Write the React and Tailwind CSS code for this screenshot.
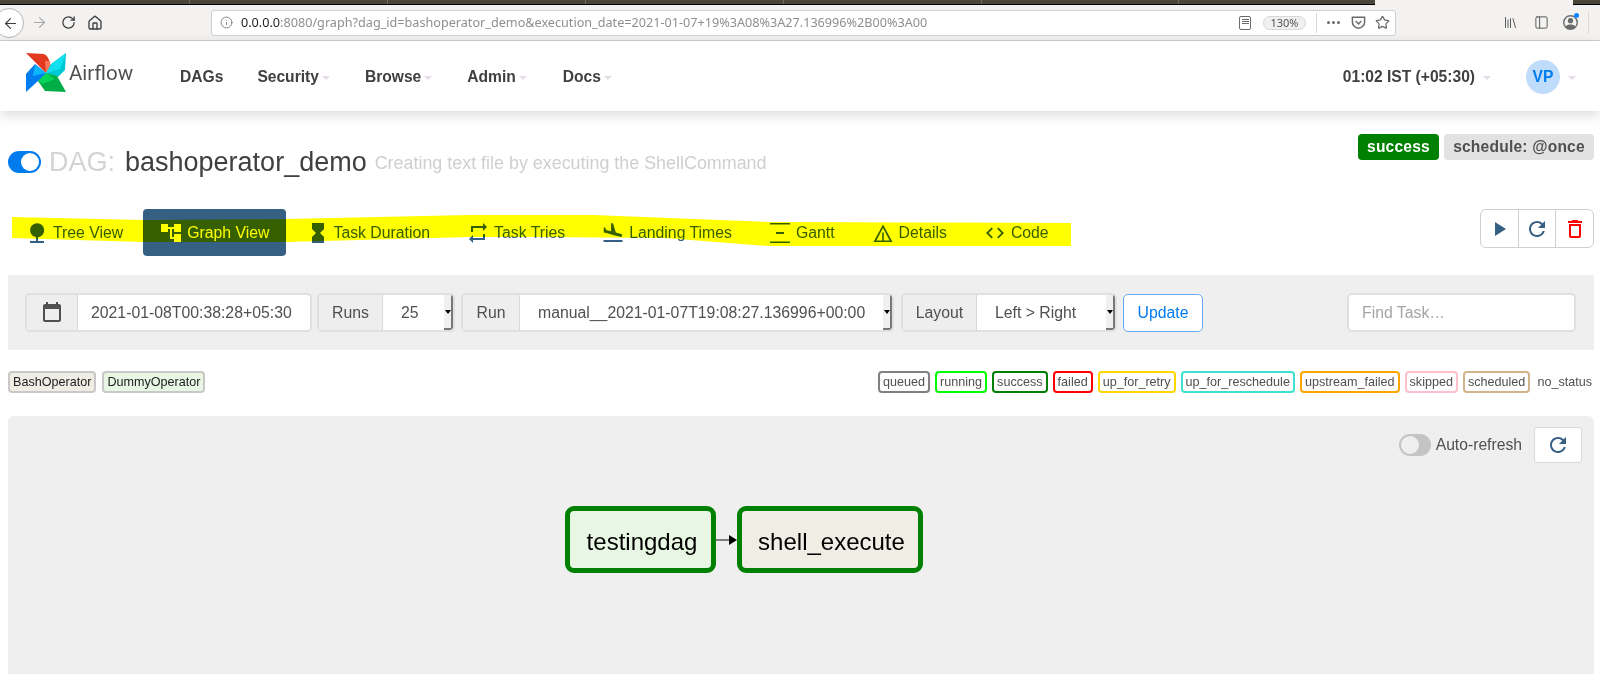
import React from 'react';
import { ArrowLeft, ArrowRight, RotateCw, Home, Info, Star, Library, PanelLeft, Menu } from 'lucide-react';

const tabIcons = {
  tree: 'M13 16.12c3.47-.41 6.17-3.36 6.17-6.95 0-3.87-3.13-7-7-7s-7 3.13-7 7c0 3.47 2.52 6.34 5.83 6.89V20H5v2h14v-2h-6v-3.88z',
  graph: 'M22 11V3h-7v3H9V3H2v8h7V8h2v10h4v3h7v-8h-7v3h-2V8h2v3z',
  hourglass: 'M6 2v6h.01L6 8.01 10 12l-4 4 .01.01H6V22h12v-5.99h-.01L18 16l-4-4 4-3.99-.01-.01H18V2H6z',
  repeat: 'M7 7h10v3l4-4-4-4v3H5v6h2V7zm10 10H7v-3l-4 4 4 4v-3h12v-6h-2v4z',
  land: 'M2.5 19h19v2h-19zm7.18-5.73l4.35 1.16 5.31 1.42c.8.21 1.62-.26 1.84-1.06.21-.8-.26-1.62-1.06-1.84l-5.31-1.42-2.76-9.02L10.12 2v8.28L5.15 8.95l-.93-2.32-1.45-.39v5.17l1.6.43 5.31 1.43z',
  gantt: 'M2 2h20v1.6H2zM8 11h8v2H8zM2 20.4h20V22H2z',
  warning: 'M12 3.5L2.5 21h19L12 3.5zm0 3.6L18.6 19.4h-5.8v-8h-1.6v8H5.4L12 7.1z',
  code: 'M8.6 6.4L3 12l5.6 5.6 1.3-1.3L5.6 12l4.3-4.3-1.3-1.3zm6.8 0l-1.3 1.3 4.3 4.3-4.3 4.3 1.3 1.3L21 12l-5.6-5.6z',
};

const refreshPath = 'M17.65 6.35A7.958 7.958 0 0012 4c-4.42 0-7.99 3.58-7.99 8s3.57 8 7.99 8c3.73 0 6.84-2.55 7.73-6h-2.08A5.99 5.99 0 0112 18c-3.31 0-6-2.69-6-6s2.69-6 6-6c1.66 0 3.14.69 4.22 1.78L13 11h7V4l-2.35 2.35z';

const tabs = [
  { label: 'Tree View', icon: 'tree' },
  { label: 'Graph View', icon: 'graph', active: true },
  { label: 'Task Duration', icon: 'hourglass' },
  { label: 'Task Tries', icon: 'repeat' },
  { label: 'Landing Times', icon: 'land' },
  { label: 'Gantt', icon: 'gantt' },
  { label: 'Details', icon: 'warning' },
  { label: 'Code', icon: 'code' },
];

const states = [
  { label: 'queued', border: 'border-[#808080]' },
  { label: 'running', border: 'border-[#00ff00]' },
  { label: 'success', border: 'border-[#008000]' },
  { label: 'failed', border: 'border-[#ff0000]' },
  { label: 'up_for_retry', border: 'border-[#ffd700]' },
  { label: 'up_for_reschedule', border: 'border-[#40e0d0]' },
  { label: 'upstream_failed', border: 'border-[#ffa500]' },
  { label: 'skipped', border: 'border-[#ffc0cb]' },
  { label: 'scheduled', border: 'border-[#d2b48c]' },
];

const Glyph = ({ d, className }) => (
  <svg viewBox="0 0 24 24" className={className} fill="currentColor">
    <path d={d} />
  </svg>
);

const Caret = ({ className = 'ml-[3px]' }) => (
  <span className={`mt-[2px] w-0 h-0 border-x-[4px] border-x-transparent border-t-[4px] border-t-[#e6dbe8] ${className}`} />
);

const Logo = () => (
  <svg viewBox="0 0 41 41" className="w-[41px] h-[41px] shrink-0 -mt-[6px]">
    <path d="M1 0 L19 1 Q24 3 25 12 L21 20 Z" fill="#e43921" />
    <path d="M20 8 L25 8 L25.5 13 L21 20 Z" fill="#ff7557" />
    <path d="M41 0 L40 17 L33 24 L21 20 L26 11 Z" fill="#00c7d4" />
    <path d="M41 0 L27 11 L21 20 L35 16 Z" fill="#11e1ee" />
    <path d="M41 39 L20 38 L13 28 L21 20 L32 23 Z" fill="#00ad46" />
    <path d="M21 20 L13 27 L17 31 L30 26 Z" fill="#04d659" />
    <path d="M1 39 L1 21 L10 11 L21 20 L13 28 Z" fill="#017cee" />
    <path d="M10 12 L21 20 L8 23 Z" fill="#0cb6ff" />
  </svg>
);

const Pocket = () => (
  <svg viewBox="0 0 16 16" className="w-[15px] h-[15px]" fill="none" stroke="#6b6b6b" strokeWidth="1.6">
    <path d="M1.5 2.5h13v5a6.5 6.5 0 0 1-13 0z" />
    <path d="M5 6.5l3 3 3-3" />
  </svg>
);

const Account = () => (
  <div className="relative w-[15px] h-[15px]">
    <svg viewBox="0 0 16 16" className="w-[15px] h-[15px]" fill="#6b6b6b">
      <path d="M8 0a8 8 0 1 0 0 16A8 8 0 0 0 8 0zm0 1.6a6.4 6.4 0 0 1 4.9 10.5C12 10.6 10.2 10 8 10s-4 .6-4.9 2.1A6.4 6.4 0 0 1 8 1.6z" />
      <circle cx="8" cy="6" r="2.8" />
    </svg>
    <span className="absolute -top-[2px] -right-[1px] w-[5px] h-[5px] rounded-full bg-[#0a84ff]" />
  </div>
);

const BrowserChrome = () => (
  <div>
    <div className="flex h-[5px]">
      <div className="w-[1375px] h-full bg-[#4a4639] border-b border-black flex">
        {[190, 198, 198, 198, 198, 197].map((w, i) => (
          <div key={i} style={{ width: w }} className="border-r border-[#6f6b60]" />
        ))}
      </div>
      <div className="w-[198px] bg-[#f3f2f1]" />
      <div className="flex-1 bg-[#4a4639] border-b border-black" />
    </div>
    <div className="h-[36px] bg-[#f3f2f1] border-b border-[#cfcecd] flex items-center relative">
      <div className="absolute -left-[6px] top-[3px] w-[30px] h-[30px] rounded-full bg-white border border-[#b5b5b5] flex items-center justify-end pr-[4px] text-[#3c3c3c]">
        <ArrowLeft size={17} strokeWidth={1.6} />
      </div>
      <ArrowRight size={17} strokeWidth={1.6} className="ml-[31px] shrink-0 text-[#a9a9a9]" />
      <RotateCw size={15} strokeWidth={2} className="ml-[13px] shrink-0 text-[#3c3c3c]" />
      <Home size={16} strokeWidth={2} className="ml-[11px] shrink-0 text-[#3c3c3c]" />
      <div className="ml-[108px] w-[1185px] shrink-0 h-[26px] bg-white rounded-[3px] border border-[#d0d0d0] flex items-center pl-[8px]">
        <Info size={13} strokeWidth={1.5} className="text-[#6b6b6b]" />
        <span className="ml-[8px] font-['Noto_Sans',sans-serif] text-[12.65px] text-[#8f8f8f] whitespace-nowrap">
          <span className="text-[#222]">0.0.0.0</span>:8080/graph?dag_id=bashoperator_demo&amp;execution_date=2021-01-07+19%3A08%3A27.136996%2B00%3A00
        </span>
        <div className="ml-auto flex items-center">
          <div className="w-[12px] h-[14px] rounded-[2px] border-[1.5px] border-[#6b6b6b] flex flex-col gap-[1px] px-[1.5px] pt-[2px]">
            <span className="h-px bg-[#6b6b6b]" />
            <span className="h-px bg-[#6b6b6b]" />
            <span className="h-px bg-[#6b6b6b]" />
          </div>
          <div className="ml-[12px] w-[43px] h-[14px] rounded-full bg-[#f0f0f0] border border-[#d8d8d8] text-[11px] leading-[12px] text-[#555] text-center font-['Noto_Sans',sans-serif]">130%</div>
          <div className="ml-[10px] w-px h-[20px] bg-[#d8d8d8]" />
          <div className="ml-[10px] flex gap-[2px]">
            <span className="w-[3px] h-[3px] rounded-full bg-[#6b6b6b]" />
            <span className="w-[3px] h-[3px] rounded-full bg-[#6b6b6b]" />
            <span className="w-[3px] h-[3px] rounded-full bg-[#6b6b6b]" />
          </div>
          <div className="ml-[11px]"><Pocket /></div>
          <Star size={15} strokeWidth={2} className="ml-[9px] mr-[5px] text-[#6b6b6b]" />
        </div>
      </div>
      <Library size={15} strokeWidth={1.6} className="ml-[107px] shrink-0 text-[#5b5b5b]" />
      <PanelLeft size={15} strokeWidth={1.6} className="ml-[16px] shrink-0 text-[#5b5b5b]" />
      <div className="ml-[14px] shrink-0"><Account /></div>
      <div className="ml-[10px] w-px h-[22px] shrink-0 bg-[#d8d8d8]" />
      <Menu size={15} strokeWidth={2} className="ml-[10px] shrink-0 text-[#5b5b5b]" />
    </div>
  </div>
);

const NavBar = () => (
  <nav className="h-[70px] bg-white shadow-[0_4px_12px_rgba(0,0,0,0.15)] flex items-center pl-[25px] pr-[24px] relative">
    <Logo />
    <span className="ml-[3px] -mt-[6px] font-['Roboto',sans-serif] text-[20.5px] text-[#51504f]">Airflow</span>
    <div className="ml-[47px] mt-[2px] flex items-center text-[15.6px] font-bold text-[#404040]">
      <span>DAGs</span>
      <span className="ml-[34px]">Security</span>
      <Caret />
      <span className="ml-[35px]">Browse</span>
      <Caret />
      <span className="ml-[35px]">Admin</span>
      <Caret />
      <span className="ml-[36px]">Docs</span>
      <Caret />
    </div>
    <div className="ml-auto mt-[2px] flex items-center text-[15.6px] font-bold text-[#404040]">
      <span>01:02 IST (+05:30)</span>
      <Caret className="ml-[8px]" />
      <div className="ml-[35px] w-[34px] h-[34px] rounded-full bg-[#bfdcfb] flex items-center justify-center text-[#017cee]">VP</div>
      <Caret className="ml-[8px]" />
    </div>
  </nav>
);

const TitleRow = () => (
  <div className="mt-[23px] pl-[8px] pr-[6px] h-[75px] flex items-start justify-between">
    <div className="pt-[8px] flex items-center whitespace-nowrap">
      <div className="w-[33px] h-[22px] rounded-full bg-[#017cee] flex items-center justify-end pr-[2px]">
        <span className="w-[18px] h-[18px] rounded-full bg-white" />
      </div>
      <span className="ml-[8px] text-[27px] text-[#d3d3d3]">DAG:</span>
      <span className="ml-[10px] text-[27px] text-[#404040]">bashoperator_demo</span>
      <span className="ml-[8px] mt-[3px] text-[17.9px] text-[#cfcfcf]">Creating text file by executing the ShellCommand</span>
    </div>
    <div className="flex gap-[5px] text-[15.6px] font-bold tracking-[0.2px]">
      <span className="w-[81px] h-[26px] rounded-[4px] bg-[#008000] text-white flex items-center justify-center">success</span>
      <span className="w-[150px] h-[26px] rounded-[4px] bg-[#e2e2e2] text-[#51504f] flex items-center justify-center">schedule: @once</span>
    </div>
  </div>
);

const TabsRow = () => (
  <div className="pl-[9px] pr-[6px] h-[47px] flex items-start justify-between">
    <div className="flex gap-[4px] h-full">
      {tabs.map(tab => (
        <div
          key={tab.label}
          className={`flex items-center gap-[4px] px-[16px] h-full rounded-[4px] text-[15.8px] text-[#365f84] whitespace-nowrap ${tab.active ? 'bg-[#365f84] text-white' : ''}`}
        >
          <Glyph d={tabIcons[tab.icon]} className="w-[24px] h-[24px]" />
          {tab.label}
        </div>
      ))}
    </div>
    <div className="flex w-[114px] h-[39px] border border-[#cfcfcf] rounded-[6px] text-[#365f84]">
      <div className="flex-1 flex items-center justify-center border-r border-[#cfcfcf]">
        <Glyph d="M8 5v14l11-7z" className="w-[24px] h-[24px]" />
      </div>
      <div className="flex-1 flex items-center justify-center border-r border-[#cfcfcf]">
        <Glyph d={refreshPath} className="w-[24px] h-[24px]" />
      </div>
      <div className="flex-1 flex items-center justify-center text-[#ff0000]">
        <Glyph d="M6 19c0 1.1.9 2 2 2h8c1.1 0 2-.9 2-2V7H6v12zM8 9h8v10H8V9zm7.5-5l-1-1h-5l-1 1H5v2h14V4h-3.5z" className="w-[24px] h-[24px]" />
      </div>
    </div>
  </div>
);

const Addon = ({ className, children }) => (
  <div className={`h-full bg-[#eeeeee] border-r border-[#d9d9d9] flex items-center justify-center text-[#51504f] ${className}`}>{children}</div>
);

const Group = ({ className, children }) => (
  <div className={`h-[39px] flex border-2 border-[#e0e0e0] rounded-[5px] bg-white overflow-hidden ${className}`}>{children}</div>
);

const SelectArrow = () => (
  <div className="ml-auto w-[9px] h-full bg-[#f0f0f0] border-r-2 border-b-2 border-[#777] rounded-br-[3px] flex items-center justify-center">
    <span className="w-0 h-0 border-x-[3.5px] border-x-transparent border-t-[4px] border-t-black" />
  </div>
);

const ControlPanel = () => (
  <div className="mx-[8px] w-[1586px] h-[75px] bg-[#efefef] flex items-center pl-[17px] pr-[18px] text-[15.8px] text-[#51504f]">
    <Group className="w-[287px]">
      <Addon className="w-[51px] shrink-0">
        <Glyph d="M19 3h-1V1h-2v2H8V1H6v2H5c-1.11 0-1.99.9-1.99 2L3 19c0 1.1.89 2 2 2h14c1.1 0 2-.9 2-2V5c0-1.1-.9-2-2-2zm0 16H5V8h14v11z" className="w-[24px] h-[24px]" />
      </Addon>
      <span className="ml-[13px] self-center whitespace-nowrap">2021-01-08T00:38:28+05:30</span>
    </Group>
    <Group className="ml-[5px] w-[138px]">
      <Addon className="w-[64px] shrink-0">Runs</Addon>
      <span className="ml-[18px] self-center">25</span>
      <SelectArrow />
    </Group>
    <Group className="ml-[6px] w-[433px]">
      <Addon className="w-[57px] shrink-0">Run</Addon>
      <span className="ml-[18px] self-center whitespace-nowrap">manual__2021-01-07T19:08:27.136996+00:00</span>
      <SelectArrow />
    </Group>
    <Group className="ml-[7px] w-[216px]">
      <Addon className="w-[74px] shrink-0">Layout</Addon>
      <span className="ml-[18px] self-center whitespace-nowrap">Left &gt; Right</span>
      <SelectArrow />
    </Group>
    <div className="ml-[6px] w-[80px] h-[38px] rounded-[5px] bg-white border border-[#6aa8f0] text-[#017cee] flex items-center justify-center">Update</div>
    <div className="ml-auto w-[229px] h-[39px] rounded-[5px] bg-white border-2 border-[#e0e0e0] flex items-center pl-[13px] text-[#a5a5a5]">Find Task…</div>
  </div>
);

const LegendRow = () => (
  <div className="mt-[21px] pl-[8px] pr-[8px] h-[22px] flex items-center justify-between text-[12.6px] text-[#51504f]">
    <div className="flex gap-[6px] text-[#222]">
      <span className="h-[22px] px-[3px] rounded-[4px] border-2 border-[#c8c8c8] bg-[#f0ede4] flex items-center">BashOperator</span>
      <span className="h-[22px] px-[3px] rounded-[4px] border-2 border-[#c8c8c8] bg-[#e8f7e4] flex items-center">DummyOperator</span>
    </div>
    <div className="flex items-center gap-[5px]">
      {states.map(s => (
        <span key={s.label} className={`h-[22px] px-[3px] rounded-[4px] border-2 bg-white flex items-center ${s.border}`}>{s.label}</span>
      ))}
      <span className="ml-[2px]">no_status</span>
    </div>
  </div>
);

const GraphPanel = () => (
  <div className="mt-[23px] mx-[8px] w-[1586px] h-[258px] bg-[#efefef] rounded-t-[6px]">
    <div className="pt-[11px] pr-[12px] flex items-center justify-end">
      <div className="w-[32px] h-[22px] rounded-full bg-[#c4c4c4] flex items-center pl-[2px]">
        <span className="w-[18px] h-[18px] rounded-full bg-[#efefef]" />
      </div>
      <span className="ml-[5px] text-[15.7px] text-[#51504f]">Auto-refresh</span>
      <div className="ml-[12px] w-[48px] h-[36px] rounded-[3px] bg-white border border-[#d9d9d9] flex items-center justify-center text-[#365f84]">
        <Glyph d={refreshPath} className="w-[24px] h-[24px]" />
      </div>
    </div>
    <div className="mt-[43px] ml-[557px] flex items-center">
      <div className="w-[151px] h-[67px] pl-[3px] pt-[4px] rounded-[9px] border-[5px] border-[#008000] bg-[#e8f7e4] flex items-center justify-center text-[24px] text-black">testingdag</div>
      <svg width="21" height="12" viewBox="0 0 21 12" className="shrink-0">
        <path d="M0 6h13" stroke="#333" strokeWidth="1.2" />
        <path d="M13 1l8 5-8 5z" fill="#000" />
      </svg>
      <div className="w-[186px] h-[67px] pl-[3px] pt-[4px] rounded-[9px] border-[5px] border-[#008000] bg-[#f0ede4] flex items-center justify-center text-[24px] text-black">shell_execute</div>
    </div>
  </div>
);

// marker stroke drawn over the tabs
const Highlight = () => (
  <svg viewBox="0 0 1600 674" className="absolute inset-0 w-[1600px] h-[674px] mix-blend-multiply pointer-events-none">
    <polygon
      points="12,217 143,220 286,219 470,215 593,215 768,222 1071,223 1071,246 768,246 665,238 540,237 470,237 286,242 143,242 12,238"
      fill="#ffff00"
    />
  </svg>
);

export default function App() {
  return (
    <div className="relative w-[1600px] h-[674px] overflow-hidden bg-white font-['Liberation_Sans',Arial,sans-serif]">
      <BrowserChrome />
      <NavBar />
      <TitleRow />
      <TabsRow />
      <div className="h-[19px]" />
      <ControlPanel />
      <LegendRow />
      <GraphPanel />
      <Highlight />
    </div>
  );
}
